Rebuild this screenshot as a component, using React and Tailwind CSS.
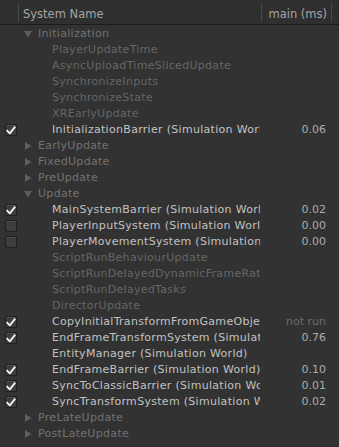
import React from 'react';

const rows = [
  { kind: 'group', name: 'Initialization', open: true },
  { kind: 'native', name: 'PlayerUpdateTime' },
  { kind: 'native', name: 'AsyncUploadTimeSlicedUpdate' },
  { kind: 'native', name: 'SynchronizeInputs' },
  { kind: 'native', name: 'SynchronizeState' },
  { kind: 'native', name: 'XREarlyUpdate' },
  { kind: 'system', name: 'InitializationBarrier (Simulation World)', checked: true, value: '0.06' },
  { kind: 'group', name: 'EarlyUpdate' },
  { kind: 'group', name: 'FixedUpdate' },
  { kind: 'group', name: 'PreUpdate' },
  { kind: 'group', name: 'Update', open: true },
  { kind: 'system', name: 'MainSystemBarrier (Simulation World)', checked: true, value: '0.02' },
  { kind: 'system', name: 'PlayerInputSystem (Simulation World)', checked: false, value: '0.00' },
  { kind: 'system', name: 'PlayerMovementSystem (Simulation World)', checked: false, value: '0.00' },
  { kind: 'native', name: 'ScriptRunBehaviourUpdate' },
  { kind: 'native', name: 'ScriptRunDelayedDynamicFrameRate' },
  { kind: 'native', name: 'ScriptRunDelayedTasks' },
  { kind: 'native', name: 'DirectorUpdate' },
  { kind: 'system', name: 'CopyInitialTransformFromGameObjectSystem', checked: true, value: 'not run', idle: true },
  { kind: 'system', name: 'EndFrameTransformSystem (Simulation World)', checked: true, value: '0.76' },
  { kind: 'system', name: 'EntityManager (Simulation World)', noToggle: true },
  { kind: 'system', name: 'EndFrameBarrier (Simulation World)', checked: true, value: '0.10' },
  { kind: 'system', name: 'SyncToClassicBarrier (Simulation World)', checked: true, value: '0.01' },
  { kind: 'system', name: 'SyncTransformSystem (Simulation World)', checked: true, value: '0.02' },
  { kind: 'group', name: 'PreLateUpdate' },
  { kind: 'group', name: 'PostLateUpdate' },
];

const Toggle = ({ checked }) => (
  <div className="w-[12px] h-[12px] rounded-[2px] bg-[#3d3d3d] border border-[#1f1f1f] shadow-[inset_0_1px_0_#505050] flex items-center justify-center">
    {checked && (
      <svg width="10" height="9" viewBox="0 0 10 9">
        <path d="M1.2 4.6 L3.8 7.4 L8.8 1.2" fill="none" stroke="#eeeeee" strokeWidth="1.9" strokeLinecap="round" strokeLinejoin="round" />
      </svg>
    )}
  </div>
);

const Arrow = ({ open }) => (
  <svg width="8" height="8" viewBox="0 0 8 8" className="shrink-0">
    {open ? <path d="M0 1 L8 1 L4 7.5 Z" fill="#5f5f5f" /> : <path d="M1 0 L7.5 4 L1 8 Z" fill="#5f5f5f" />}
  </svg>
);

export default function App() {
  return (
    <div className="w-[339px] h-[447px] overflow-hidden bg-[#323232] text-[11px] leading-[16px]" style={{ fontFamily: '"DejaVu Sans", sans-serif' }}>
      {/* Header */}
      <div className="h-[25px] flex items-center bg-[#2f2f2f] border-b border-[#1b1b1b] text-[#a4a4a4] text-[11.5px]">
        <div className="w-[18px] h-full" />
        <div className="w-px h-[19px] bg-[#4a4a4a]" />
        <div className="w-[242px] pl-[4px] pt-[3px] truncate">System Name</div>
        <div className="w-px h-[19px] bg-[#4a4a4a]" />
        <div className="w-[69px] text-right pr-[4px] pt-[3px]">main (ms)</div>
        <div className="w-px h-[19px] bg-[#4a4a4a]" />
      </div>

      {/* Rows */}
      <div className="flex flex-col pt-[1px] tracking-[0.3px]">
        {rows.map((r, i) => (
          <div key={i} className="h-[16px] flex items-center">
            <div className="w-[18px] flex justify-center pl-[4px]">
              {r.kind === 'system' && !r.noToggle && <Toggle checked={r.checked} />}
            </div>
            <div className="w-[242px] overflow-hidden whitespace-nowrap">
              {r.kind === 'group' ? (
                <div className="flex items-center gap-[6px] pl-[6px] text-[#727272]">
                  <Arrow open={r.open} />
                  <span>{r.name}</span>
                </div>
              ) : (
                <div className={`pl-[34px] ${r.kind === 'native' ? 'text-[#666666]' : 'text-[#c2c2c2]'}`}>{r.name}</div>
              )}
            </div>
            <div className={`w-[66px] text-right tracking-normal ${r.idle ? 'text-[#6b6b6b]' : 'text-[#acacac]'}`}>{r.value}</div>
          </div>
        ))}
      </div>
    </div>
  );
}
